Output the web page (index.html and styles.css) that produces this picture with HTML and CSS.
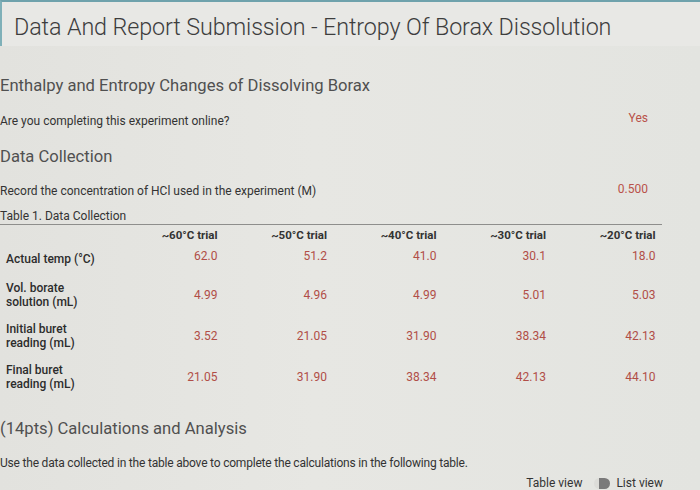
FILE: index.html
```html
<!DOCTYPE html>
<html>
<head>
<meta charset="utf-8">
<link rel="stylesheet" href="styles.css">
</head>
<body>
<div class="page">
  <header class="top">
    <h1 class="title">Data And Report Submission - Entropy Of Borax Dissolution</h1>
  </header>
  <main class="content">
    <h2 class="section first">Enthalpy and Entropy Changes of Dissolving Borax</h2>
    <div class="qa q1">
      <span class="q">Are you completing this experiment online?</span>
      <span class="a">Yes</span>
    </div>
    <h2 class="section dc">Data Collection</h2>
    <div class="qa q2">
      <span class="q">Record the concentration of HCl used in the experiment (M)</span>
      <span class="a">0.500</span>
    </div>
    <div class="caption">Table 1. Data Collection</div>
    <div class="table">
      <div class="th"></div>
      <div class="th">~60°C trial</div>
      <div class="th">~50°C trial</div>
      <div class="th">~40°C trial</div>
      <div class="th">~30°C trial</div>
      <div class="th">~20°C trial</div>

      <div class="lbl r1">Actual temp (°C)</div>
      <div class="val r1">62.0</div>
      <div class="val r1">51.2</div>
      <div class="val r1">41.0</div>
      <div class="val r1">30.1</div>
      <div class="val r1">18.0</div>

      <div class="lbl">Vol. borate<br>solution (mL)</div>
      <div class="val">4.99</div>
      <div class="val">4.96</div>
      <div class="val">4.99</div>
      <div class="val">5.01</div>
      <div class="val">5.03</div>

      <div class="lbl">Initial buret<br>reading (mL)</div>
      <div class="val">3.52</div>
      <div class="val">21.05</div>
      <div class="val">31.90</div>
      <div class="val">38.34</div>
      <div class="val">42.13</div>

      <div class="lbl">Final buret<br>reading (mL)</div>
      <div class="val">21.05</div>
      <div class="val">31.90</div>
      <div class="val">38.34</div>
      <div class="val">42.13</div>
      <div class="val">44.10</div>
    </div>
    <h2 class="section calc">(14pts) Calculations and Analysis</h2>
    <p class="instr">Use the data collected in the table above to complete the calculations in the following table.</p>
    <div class="views">
      <span class="view">Table view</span>
      <span class="toggle"><span class="knob"></span></span>
      <span class="view">List view</span>
    </div>
  </main>
</div>
</body>
</html>
```

FILE: styles.css
```css
* { box-sizing: border-box; }
html, body { margin: 0; padding: 0; }
body {
  width: 700px;
  height: 490px;
  overflow: hidden;
  font-family: Roboto, "Liberation Sans", sans-serif;
  color: #3a3a3a;
  background: linear-gradient(90deg, #e2e2de 0%, #e7e7e3 45%, #e3e4e0 100%);
}
.page { display: flex; flex-direction: column; }
.top {
  height: 46px;
  border-top: 2px solid #6fa2ac;
  border-left: 2px solid #7fb0b8;
  background: #e8e8e5;
  padding: 11px 0 0 12px;
}
.title {
  margin: 0;
  font-weight: 300;
  font-size: 23.3px;
  line-height: 28px;
  color: #3d3d3d;
  letter-spacing: -0.1px;
}
.content { display: flex; flex-direction: column; padding-left: 0; }
.section {
  margin: 0;
  font-weight: 400;
  font-size: 16.6px;
  line-height: 20px;
  color: #505050;
}
.first { margin-top: 30px; }
.qa {
  display: flex;
  justify-content: space-between;
  align-items: center;
  font-size: 12px;
  line-height: 14px;
  padding-right: 52px;
}
.q { color: #333; }
.a { color: #b9524a; font-size: 12px; }
.q1 { margin-top: 18px; }
.q1 .a { position: relative; top: -3px; }
.dc { margin-top: 19px; }
.q2 { margin-top: 17px; }
.q2 .a { position: relative; top: -2px; }
.caption {
  margin-top: 11px;
  font-size: 12px;
  line-height: 14px;
  color: #333;
}
.table {
  margin-top: 1px;
  width: 662px;
  border-top: 1px solid #8e8e8c;
  display: grid;
  grid-template-columns: 108px repeat(5, 109.5px);
  grid-template-rows: 19px 30px 41px 41px 41px;
  align-items: center;
}
.th {
  text-align: right;
  font-size: 11.5px;
  font-weight: 700;
  color: #333;
  padding-top: 1px;
}
.lbl {
  padding-left: 6px;
  font-size: 12px;
  line-height: 14px;
  font-weight: 500;
  color: #2c2c2c;
}
.val {
  text-align: right;
  font-size: 12px;
  color: #b14e47;
}
.val.r1 { position: relative; top: -3px; }
.calc { margin-top: 22px; }
.instr {
  margin: 17px 0 0 0;
  font-size: 12px;
  line-height: 14px;
  color: #333;
  letter-spacing: -0.2px;
}
.views {
  display: flex;
  justify-content: flex-end;
  align-items: center;
  gap: 6px;
  padding-right: 37px;
  margin-top: 6px;
  font-size: 12px;
  color: #333;
}
.toggle {
  width: 16px;
  height: 11px;
  border-radius: 6px;
  background: #dcdcd8;
  position: relative;
  margin-left: 6px;
}
.knob {
  position: absolute;
  right: 0;
  top: 0;
  width: 11px;
  height: 11px;
  border-radius: 0 6px 6px 0;
  background: #7a7a7a;
}
```
